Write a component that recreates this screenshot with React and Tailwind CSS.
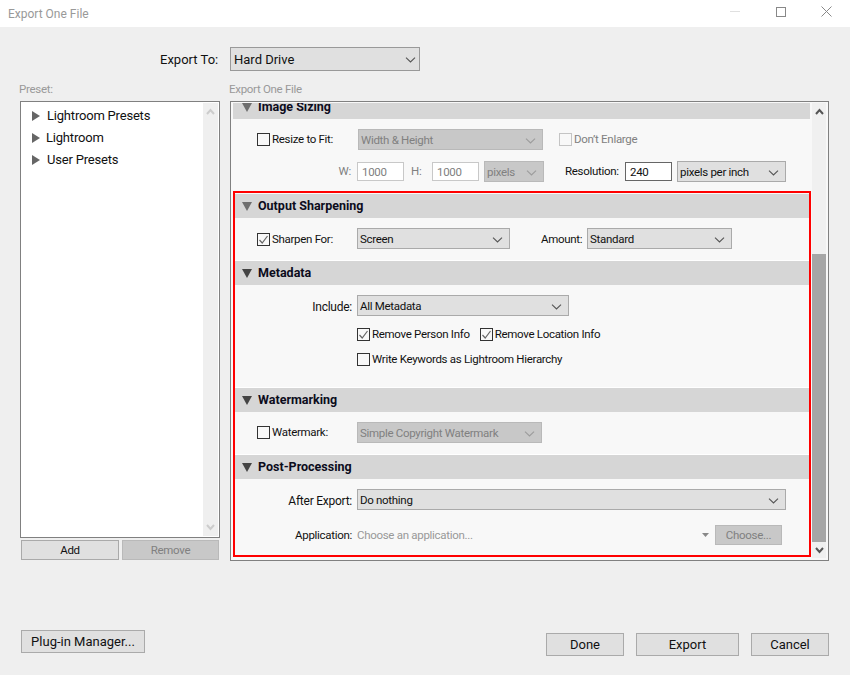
import React from "react";

const font = { fontFamily: 'Roboto, "Open Sans", sans-serif' };

function Chevron({ className = "text-[#555]" }) {
  return (
    <svg width="11" height="6" viewBox="0 0 11 6" fill="none" stroke="currentColor" strokeWidth="1.1" className={`shrink-0 ${className}`}>
      <path d="M1 0.6 L5.5 5 L10 0.6" />
    </svg>
  );
}

function ScrollArrow({ up, className = "text-[#555]" }) {
  return (
    <svg width="9" height="7" viewBox="0 0 9 7" fill="none" stroke="currentColor" strokeWidth="2" className={className}>
      <path d={up ? "M1 6 L4.5 2 L8 6" : "M1 1 L4.5 5 L8 1"} />
    </svg>
  );
}

function Select({ width, value, disabled }) {
  return (
    <div
      className={`${width} h-[21px] flex items-center justify-between pl-[2px] pr-[6px] pt-[2px] border shrink-0 text-[11.5px] tracking-[-0.3px] ${
        disabled ? "bg-[#c8c8c8] border-[#b9b9b9] text-[#808080]" : "bg-[#e0e0e0] border-[#aaaaaa] text-[#111]"
      }`}
    >
      <span>{value}</span>
      <Chevron className={disabled ? "text-[#9c9c9c]" : "text-[#555]"} />
    </div>
  );
}

function Check({ checked, disabled, label }) {
  return (
    <div className="flex items-center gap-[2px] shrink-0 h-[13px]">
      <div className={`w-[13px] h-[13px] border flex items-center justify-center ${disabled ? "border-[#c4c4c4] bg-[#f8f8f8]" : "border-[#333] bg-[#f8f8f8]"}`}>
        {checked && (
          <svg width="11" height="10" viewBox="0 0 11 10" fill="none" stroke="#666" strokeWidth="1.2">
            <path d="M1.5 5 L4.2 8 L9.5 1" />
          </svg>
        )}
      </div>
      <span className={`text-[11.5px] tracking-[-0.3px] ${disabled ? "text-[#808080]" : "text-[#111]"}`}>{label}</span>
    </div>
  );
}

function SectionHead({ title, clipped, faded }) {
  return (
    <div className={`shrink-0 bg-[#d6d6d6] flex items-center pl-[9px] gap-[6px] ${clipped ? "h-[23px] -mt-[7px]" : "h-[24px]"}`}>
      <svg width="10" height="9" viewBox="0 0 10 9" className="shrink-0">
        <path d="M0 0 H10 L5 9 Z" fill={faded ? "#6e6e6e" : "#444"} />
      </svg>
      <span className="text-[12.5px] font-bold text-[#0c0c1c]">{title}</span>
    </div>
  );
}

function Button({ width, label, disabled, small }) {
  return (
    <div
      className={`${width} flex items-center justify-center border shrink-0 ${
        small ? "h-[20px] pt-[2px] text-[11.5px] tracking-[-0.3px]" : "h-[23px] text-[13px]"
      } ${disabled ? "bg-[#c8c8c8] border-[#b9b9b9] text-[#808080]" : "bg-[#e0e0e0] border-[#aaaaaa] text-[#111]"}`}
    >
      {label}
    </div>
  );
}

const presets = [
  { name: "Lightroom Presets", gap: "gap-[7px]" },
  { name: "Lightroom", gap: "gap-[6px]" },
  { name: "User Presets", gap: "gap-[7px]" },
];

export default function App() {
  return (
    <div style={font} className="w-[850px] h-[675px] bg-[#efefef] overflow-hidden flex flex-col">
      {/* title bar */}
      <div className="h-[27px] bg-white flex items-center justify-between pl-[8px] pr-[18px] shrink-0">
        <span className="text-[12px] text-[#999]">Export One File</span>
        <div className="flex items-center gap-[36px] mb-[4px]">
          <div className="w-[10px] h-px bg-[#e0e0e0]" />
          <div className="w-[10px] h-[10px] border border-[#888]" />
          <svg width="11" height="11" viewBox="0 0 11 11" stroke="#888" strokeWidth="1" className="-ml-[1px]">
            <path d="M0.5 0.5 L10.5 10.5 M10.5 0.5 L0.5 10.5" />
          </svg>
        </div>
      </div>

      <div className="flex-1 flex flex-col pl-[20px] pr-[21px]">
        {/* export target */}
        <div className="flex items-center h-[24px] mt-[20px] pl-[140px]">
          <span className="w-[70px] pt-[2px] text-[13px] text-[#111]">Export To:</span>
          <div className="w-[190px] h-[24px] flex items-center justify-between pl-[3px] pr-[3px] pt-[2px] border border-[#999] bg-[#e0e0e0] text-[13px] text-[#111]">
            <span>Hard Drive</span>
            <Chevron />
          </div>
        </div>

        <div className="flex gap-[10px] mt-[10px]">
          {/* presets column */}
          <div className="w-[200px] flex flex-col">
            <span className="h-[20px] text-[11.5px] tracking-[-0.3px] text-[#999] -ml-px">Preset:</span>
            <div className="h-[437px] bg-white border border-[#808080] flex justify-between pr-px">
              <div className="pt-[3px]">
                {presets.map((p) => (
                  <div key={p.name} className={`h-[22px] flex items-center pl-[11px] ${p.gap}`}>
                    <svg width="8" height="10" viewBox="0 0 8 10" className="shrink-0">
                      <path d="M0 0 L8 5 L0 10 Z" fill="#666" />
                    </svg>
                    <span className="text-[13px] tracking-[-0.2px] text-[#111]">{p.name}</span>
                  </div>
                ))}
              </div>
              <div className="w-[15px] bg-[#efefef] my-px flex flex-col items-center justify-between py-[5px]">
                <ScrollArrow up className="text-[#ccc]" />
                <ScrollArrow className="text-[#ccc]" />
              </div>
            </div>
            <div className="flex justify-between pl-px pr-px mt-[2px]">
              <Button width="w-[98px]" small label="Add" />
              <Button width="w-[97px]" small label="Remove" disabled />
            </div>
          </div>

          {/* export settings column */}
          <div className="w-[599px] flex flex-col">
            <span className="h-[20px] text-[11.5px] tracking-[-0.3px] text-[#999] -ml-px">Export One File</span>
            <div className="relative h-[460px] bg-[#f8f8f8] border border-[#808080] flex pl-[2px] pt-px">
              <div className="w-[577px] flex flex-col overflow-hidden">
                <SectionHead title="Image Sizing" clipped faded />
                <div className="h-[75px] pl-[24px] pt-[10px] flex flex-col gap-[11px]">
                  <div className="flex items-center">
                    <div className="w-[101px]">
                      <Check label="Resize to Fit:" />
                    </div>
                    <Select width="w-[185px]" value="Width & Height" disabled />
                    <div className="ml-[16px]">
                      <Check label="Don’t Enlarge" disabled />
                    </div>
                  </div>
                  <div className="flex items-center text-[11.5px] tracking-[-0.3px]">
                    <span className="w-[94px] text-[#808080] text-right">W:</span>
                    <div className="ml-[6px] w-[47px] h-[19px] border border-[#c8c8c8] bg-white text-[#808080] pl-[4px] leading-[18px]">1000</div>
                    <span className="ml-[7px] w-[21px] text-[#808080]">H:</span>
                    <div className="w-[47px] h-[19px] border border-[#c8c8c8] bg-white text-[#808080] pl-[4px] leading-[18px]">1000</div>
                    <div className="ml-[5px]">
                      <Select width="w-[60px]" value="pixels" disabled />
                    </div>
                    <span className="ml-[21px] w-[60px] text-[#111]">Resolution:</span>
                    <div className="w-[47px] h-[19px] border border-[#666] bg-white text-[#111] pl-[4px] leading-[18px]">240</div>
                    <div className="ml-[5px]">
                      <Select width="w-[109px]" value="pixels per inch" />
                    </div>
                  </div>
                </div>

                <SectionHead title="Output Sharpening" faded />
                <div className="h-[43px] pl-[24px] pt-[10px] flex items-start border-b border-white">
                  <div className="w-[100px] h-[21px] pt-[2px] flex items-center">
                    <Check checked label="Sharpen For:" />
                  </div>
                  <Select width="w-[153px]" value="Screen" />
                  <span className="ml-[31px] w-[46px] h-[21px] text-[11.5px] tracking-[-0.3px] leading-[22px] text-[#111]">Amount:</span>
                  <Select width="w-[145px]" value="Standard" />
                </div>

                <SectionHead title="Metadata" />
                <div className="h-[103px] pt-[10px] flex flex-col border-b border-white">
                  <div className="flex items-center">
                    <span className="w-[119px] pt-[2px] text-right text-[12px] tracking-[-0.25px] text-[#111]">Include:</span>
                    <div className="ml-[5px]">
                      <Select width="w-[212px]" value="All Metadata" />
                    </div>
                  </div>
                  <div className="flex gap-[10px] mt-[12px] pl-[124px]">
                    <Check checked label="Remove Person Info" />
                    <Check checked label="Remove Location Info" />
                  </div>
                  <div className="mt-[12px] pl-[124px]">
                    <Check label="Write Keywords as Lightroom Hierarchy" />
                  </div>
                </div>

                <SectionHead title="Watermarking" />
                <div className="h-[43px] pl-[24px] pt-[10px] flex items-start border-b border-white">
                  <div className="w-[100px] h-[21px] flex items-center">
                    <Check label="Watermark:" />
                  </div>
                  <Select width="w-[185px]" value="Simple Copyright Watermark" disabled />
                </div>

                <SectionHead title="Post-Processing" />
                <div className="h-[79px] pt-[10px] flex flex-col text-[11.5px] tracking-[-0.3px] text-[#111]">
                  <div className="flex items-center">
                    <span className="w-[119px] pt-[2px] text-right text-[12px] tracking-[-0.25px]">After Export:</span>
                    <div className="ml-[5px]">
                      <Select width="w-[429px]" value="Do nothing" />
                    </div>
                  </div>
                  <div className="flex items-center mt-[15px]">
                    <span className="w-[119px] pt-[2px] text-right">Application:</span>
                    <span className="ml-[5px] pt-[2px] w-[345px] text-[#999]">Choose an application...</span>
                    <svg width="7" height="4" viewBox="0 0 7 4" className="shrink-0">
                      <path d="M0 0 H7 L3.5 4 Z" fill="#888" />
                    </svg>
                    <div className="ml-[6px]">
                      <Button width="w-[67px]" small label="Choose..." disabled />
                    </div>
                  </div>
                </div>
              </div>

              {/* scrollbar */}
              <div className="ml-[2px] w-[14px] h-[455px] bg-[#f0f0f0] flex flex-col">
                <div className="h-[16px] flex items-center justify-center">
                  <ScrollArrow up />
                </div>
                <div className="mt-[135px] h-[288px] bg-[#a6a6a6]" />
                <div className="h-[16px] flex items-center justify-center">
                  <ScrollArrow />
                </div>
              </div>

              {/* red annotation around the lower sections */}
              <div className="absolute left-[2px] top-[89px] w-[578px] h-[366px] border-2 border-[#ff0000] pointer-events-none" />
            </div>
          </div>
        </div>

        {/* footer buttons */}
        <div className="flex items-start justify-between mt-[69px] pl-px">
          <Button width="w-[124px]" label="Plug-in Manager..." />
          <div className="flex mt-[3px]">
            <Button width="w-[78px]" label="Done" />
            <div className="ml-[12px]">
              <Button width="w-[103px]" label="Export" />
            </div>
            <div className="ml-[12px]">
              <Button width="w-[78px]" label="Cancel" />
            </div>
          </div>
        </div>
      </div>
    </div>
  );
}
